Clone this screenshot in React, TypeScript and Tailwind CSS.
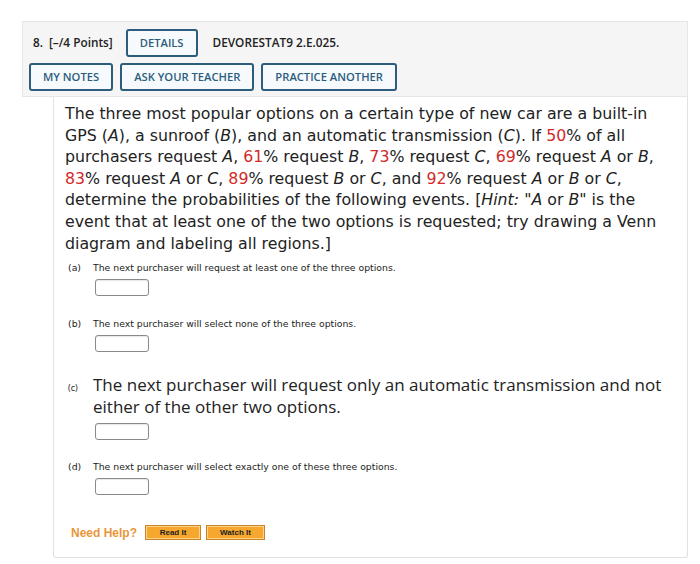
import React from 'react';

const RED = 'text-[#d42a2a]';

function HeaderButton({ label }: { label: string }) {
    return (
        <div className="flex h-[28px] items-center rounded-[3px] border-2 border-[#2c5d7c] bg-[#f7fafc] px-[12px] text-[11.2px] font-semibold text-[#2c5d7c]">
            {label}
        </div>
    );
}

function AnswerBox() {
    return <div className="ml-[30px] h-[17px] w-[54px] rounded-[3px] border border-[#8a8a8a] bg-white shadow-[inset_0_1px_1px_rgba(0,0,0,0.1)]" />;
}

function SmallPart({ tag, text }: { tag: string; text: string }) {
    return (
        <div>
            <div className="flex items-baseline text-[9.3px] text-[#222]">
                <span className="w-[28px] pl-[3px]">{tag}</span>
                <span>{text}</span>
            </div>
            <div className="mt-[4px]">
                <AnswerBox />
            </div>
        </div>
    );
}

export default function App() {
    return (
        <div className="h-[564px] w-[700px] bg-white pl-[22px] pt-[21px] font-['Open_Sans',sans-serif]">
            {/* question header */}
            <div className="w-[666px] border border-[#e6e6e6] bg-[#f5f5f5] pb-[5px] pl-[6px] pt-[7px]">
                <div className="flex items-center text-[11.8px] font-semibold text-[#222]">
                    <span className="ml-[4px]">8.</span>
                    <span className="ml-[6px]">[–/4 Points]</span>
                    <div className="ml-[13px]">
                        <HeaderButton label="DETAILS" />
                    </div>
                    <span className="ml-[15px]">DEVORESTAT9 2.E.025.</span>
                </div>
                <div className="mt-[6px] flex gap-[7px]">
                    <HeaderButton label="MY NOTES" />
                    <HeaderButton label="ASK YOUR TEACHER" />
                    <HeaderButton label="PRACTICE ANOTHER" />
                </div>
            </div>

            {/* question body */}
            <div className="ml-[31px] h-[461px] w-[635px] rounded-b-[3px] border-x border-b border-[#e2e2e2] pl-[11px] pt-[6px]">
                <p className="w-[600px] font-['DejaVu_Sans',Verdana,sans-serif] text-[15.8px] leading-[21.6px] text-[#222]">
                    The three most popular options on a certain type of new car are a built-in GPS (<i>A</i>), a sunroof (<i>B</i>), and an
                    automatic transmission (<i>C</i>). If <span className={RED}>50</span>% of all purchasers request <i>A</i>,{' '}
                    <span className={RED}>61</span>% request <i>B</i>, <span className={RED}>73</span>% request <i>C</i>,{' '}
                    <span className={RED}>69</span>% request <i>A</i> or <i>B</i>, <span className={RED}>83</span>% request <i>A</i> or{' '}
                    <i>C</i>, <span className={RED}>89</span>% request <i>B</i> or <i>C</i>, and <span className={RED}>92</span>% request{' '}
                    <i>A</i> or <i>B</i> or <i>C</i>, determine the probabilities of the following events. [<i>Hint:</i> "<i>A</i> or{' '}
                    <i>B</i>" is the event that at least one of the two options is requested; try drawing a Venn diagram and labeling
                    all regions.]
                </p>

                <div className="mt-[7px] font-['DejaVu_Sans',Verdana,sans-serif]">
                    <SmallPart tag="(a)" text="The next purchaser will request at least one of the three options." />
                </div>
                <div className="mt-[21px] font-['DejaVu_Sans',Verdana,sans-serif]">
                    <SmallPart tag="(b)" text="The next purchaser will select none of the three options." />
                </div>

                <div className="mt-[22px]">
                    <div className="flex items-start text-[#222]">
                        <span className="w-[28px] pl-[3px] pt-[7px] text-[9px]">(c)</span>
                        <span className="w-[590px] text-[17px] leading-[22px]">
                            The next purchaser will request only an automatic transmission and not either of the other two options.
                        </span>
                    </div>
                    <div className="mt-[5px]">
                        <AnswerBox />
                    </div>
                </div>

                <div className="mt-[20px] font-['DejaVu_Sans',Verdana,sans-serif]">
                    <SmallPart tag="(d)" text="The next purchaser will select exactly one of these three options." />
                </div>

                <div className="ml-[6px] mt-[29px] flex items-center gap-[8px] font-['Liberation_Sans',Arial,sans-serif]">
                    <span className="text-[12px] font-bold text-[#e8973a]">Need Help?</span>
                    <div className="flex h-[15px] w-[56px] items-center justify-center border border-[#c9822a] bg-[#f6a82e] text-[8px] font-bold text-[#222] shadow-[inset_0_0_0_1px_#fbd48a]">
                        Read It
                    </div>
                    <div className="-ml-[3px] flex h-[15px] w-[59px] items-center justify-center border border-[#c9822a] bg-[#f6a82e] text-[8px] font-bold text-[#222] shadow-[inset_0_0_0_1px_#fbd48a]">
                        Watch It
                    </div>
                </div>
            </div>
        </div>
    );
}
